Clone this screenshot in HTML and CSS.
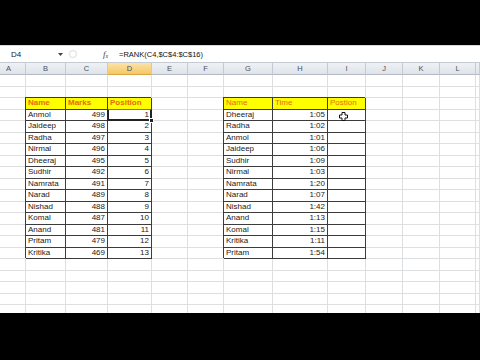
FILE: index.html
```html
<!DOCTYPE html>
<html>
<head>
<meta charset="utf-8">
<link rel="stylesheet" href="styles.css">
</head>
<body>
<div class="letterbox"></div>
<div class="fbar">
  <div class="namebox"><span>D4</span><svg class="dd" width="5" height="3" viewBox="0 0 5 3"><path d="M0 0h5L2.5 3z" fill="#444"/></svg></div>
  <div class="fbtns"><svg width="10" height="10" viewBox="0 0 10 10"><circle cx="5" cy="5" r="3.5" fill="none" stroke="#e4e6ea" stroke-width="1.5"/></svg></div>
  <div class="fx">f<sub>x</sub></div>
  <div class="formula">=RANK(C4,$C$4:$C$16)</div>
</div>
<div class="sheetwrap">
<table class="sheet">
<colgroup>
<col class="c26"><col class="c40"><col class="c42"><col class="c44"><col class="c36"><col class="c36"><col class="c49"><col class="c55"><col class="c38"><col class="c37"><col class="c37"><col class="c36"><col class="c4">
</colgroup>
<tr class="colhead"><th class="a">A</th><th>B</th><th>C</th><th class="cur">D</th><th>E</th><th>F</th><th>G</th><th>H</th><th>I</th><th>J</th><th>K</th><th>L</th><th></th></tr>
<tr><td></td><td></td><td></td><td></td><td></td><td></td><td></td><td></td><td></td><td></td><td></td><td></td><td></td></tr>
<tr><td></td><td></td><td></td><td></td><td></td><td></td><td></td><td></td><td></td><td></td><td></td><td></td><td></td></tr>
<tr><td></td><td class="b h strong">Name</td><td class="b h strong">Marks</td><td class="b h strong">Position</td><td></td><td></td><td class="b h">Name</td><td class="b h">Time</td><td class="b h">Postion</td><td></td><td></td><td></td><td></td></tr>
<tr><td></td><td class="b">Anmol</td><td class="b n">499</td><td class="b n sel">1</td><td></td><td></td><td class="b">Dheeraj</td><td class="b n">1:05</td><td class="b cursorcell"><svg class="cursor" width="9" height="9" viewBox="0 0 9 9"><path d="M3 .5h3v2.5h2.5v3H6v2.5H3V6H.5V3H3z" fill="#fff" stroke="#111" stroke-width="1"/></svg></td><td></td><td></td><td></td><td></td></tr>
<tr><td></td><td class="b">Jaideep</td><td class="b n">498</td><td class="b n">2</td><td></td><td></td><td class="b">Radha</td><td class="b n">1:02</td><td class="b"></td><td></td><td></td><td></td><td></td></tr>
<tr><td></td><td class="b">Radha</td><td class="b n">497</td><td class="b n">3</td><td></td><td></td><td class="b">Anmol</td><td class="b n">1:01</td><td class="b"></td><td></td><td></td><td></td><td></td></tr>
<tr><td></td><td class="b">Nirmal</td><td class="b n">496</td><td class="b n">4</td><td></td><td></td><td class="b">Jaideep</td><td class="b n">1:06</td><td class="b"></td><td></td><td></td><td></td><td></td></tr>
<tr><td></td><td class="b">Dheeraj</td><td class="b n">495</td><td class="b n">5</td><td></td><td></td><td class="b">Sudhir</td><td class="b n">1:09</td><td class="b"></td><td></td><td></td><td></td><td></td></tr>
<tr><td></td><td class="b">Sudhir</td><td class="b n">492</td><td class="b n">6</td><td></td><td></td><td class="b">Nirmal</td><td class="b n">1:03</td><td class="b"></td><td></td><td></td><td></td><td></td></tr>
<tr><td></td><td class="b">Namrata</td><td class="b n">491</td><td class="b n">7</td><td></td><td></td><td class="b">Namrata</td><td class="b n">1:20</td><td class="b"></td><td></td><td></td><td></td><td></td></tr>
<tr><td></td><td class="b">Narad</td><td class="b n">489</td><td class="b n">8</td><td></td><td></td><td class="b">Narad</td><td class="b n">1:07</td><td class="b"></td><td></td><td></td><td></td><td></td></tr>
<tr><td></td><td class="b">Nishad</td><td class="b n">488</td><td class="b n">9</td><td></td><td></td><td class="b">Nishad</td><td class="b n">1:42</td><td class="b"></td><td></td><td></td><td></td><td></td></tr>
<tr><td></td><td class="b">Komal</td><td class="b n">487</td><td class="b n">10</td><td></td><td></td><td class="b">Anand</td><td class="b n">1:13</td><td class="b"></td><td></td><td></td><td></td><td></td></tr>
<tr><td></td><td class="b">Anand</td><td class="b n">481</td><td class="b n">11</td><td></td><td></td><td class="b">Komal</td><td class="b n">1:15</td><td class="b"></td><td></td><td></td><td></td><td></td></tr>
<tr><td></td><td class="b">Pritam</td><td class="b n">479</td><td class="b n">12</td><td></td><td></td><td class="b">Kritika</td><td class="b n">1:11</td><td class="b"></td><td></td><td></td><td></td><td></td></tr>
<tr><td></td><td class="b">Kritika</td><td class="b n">469</td><td class="b n">13</td><td></td><td></td><td class="b">Pritam</td><td class="b n">1:54</td><td class="b"></td><td></td><td></td><td></td><td></td></tr>
<tr><td></td><td></td><td></td><td></td><td></td><td></td><td></td><td></td><td></td><td></td><td></td><td></td><td></td></tr>
<tr><td></td><td></td><td></td><td></td><td></td><td></td><td></td><td></td><td></td><td></td><td></td><td></td><td></td></tr>
<tr><td></td><td></td><td></td><td></td><td></td><td></td><td></td><td></td><td></td><td></td><td></td><td></td><td></td></tr>
<tr><td></td><td></td><td></td><td></td><td></td><td></td><td></td><td></td><td></td><td></td><td></td><td></td><td></td></tr>
<tr><td></td><td></td><td></td><td></td><td></td><td></td><td></td><td></td><td></td><td></td><td></td><td></td><td></td></tr>
<tr><td></td><td></td><td></td><td></td><td></td><td></td><td></td><td></td><td></td><td></td><td></td><td></td><td></td></tr>
</table>
</div>
</body>
</html>
```

FILE: styles.css
```css
html, body {
  margin: 0;
  padding: 0;
  background: #000;
}
body {
  width: 480px;
  height: 360px;
  overflow: hidden;
  font-family: "Liberation Sans", Arial, sans-serif;
  color: #222;
}
.letterbox {
  height: 45px;
  background: #000;
}
.fbar {
  height: 16px;
  background: #fff;
  border-top: 1px solid #d6dae0;
  border-bottom: 1px solid #c6cbd2;
  display: flex;
  align-items: center;
  font-size: 8px;
}
.namebox {
  width: 65px;
  box-sizing: border-box;
  padding: 0 2px 0 11px;
  display: flex;
  align-items: center;
  justify-content: space-between;
}
.fbtns {
  width: 38px;
  display: flex;
  align-items: center;
  padding-left: 3px;
  box-sizing: border-box;
}
.fx {
  width: 16px;
  font-family: "Liberation Serif", serif;
  font-style: italic;
  font-size: 9px;
  color: #444;
}
.fx sub {
  font-size: 6px;
  vertical-align: -1px;
}
.formula {
  font-size: 7.5px;
  color: #111;
}
.sheetwrap {
  height: 250px;
  overflow: hidden;
  background: #fff;
}
.sheet {
  border-collapse: separate;
  border-spacing: 0;
  table-layout: fixed;
  width: 480px;
  font-size: 8px;
}
.c26 { width: 26px; }
.c40 { width: 40px; }
.c42 { width: 42px; }
.c44 { width: 44px; }
.c36 { width: 36px; }
.c49 { width: 49px; }
.c55 { width: 55px; }
.c38 { width: 38px; }
.c37 { width: 37px; }
.c4 { width: 4px; }
.colhead th {
  height: 11px;
  padding: 0;
  font-weight: normal;
  font-size: 7.5px;
  color: #4a4f57;
  background: linear-gradient(#eef1f5, #dfe4ea);
  border-right: 1px solid #c4cad3;
  border-bottom: 1px solid #b3bac4;
  text-align: center;
  line-height: 11px;
}
.colhead th.a {
  text-align: left;
  padding-left: 6px;
}
.colhead th.cur {
  background: linear-gradient(#fbe3a8, #f5c767);
  border-bottom-color: #d9a441;
}
.sheet tr {
  height: 11.5px;
}
.sheet td {
  padding: 0 2px;
  line-height: 10px;
  border-right: 1px solid #dedfe1;
  border-bottom: 1px solid #dedfe1;
  white-space: nowrap;
  overflow: hidden;
}
.sheet td.b {
  border-right-color: #3c3c3c;
  border-bottom-color: #3c3c3c;
  box-shadow: -1px -1px 0 #3c3c3c;
}
.sheet td.n {
  text-align: right;
}
.sheet td.h {
  background: #ffff00;
  color: #e46c0a;
}
.sheet td.strong {
  font-weight: bold;
}
.sheet td.sel {
  position: relative;
  overflow: visible;
}
.sheet td.sel::after {
  content: "";
  position: absolute;
  left: -1px;
  top: -1px;
  right: -1px;
  bottom: -1px;
  border: 2px solid #222;
  border-top-width: 1px;
  border-top-color: #777;
}
.sheet td.sel::before {
  content: "";
  position: absolute;
  right: -3px;
  bottom: -3px;
  width: 3px;
  height: 3px;
  background: #222;
  border: 1px solid #fff;
  z-index: 2;
}
.sheet td.cursorcell {
  position: relative;
  overflow: visible;
}
.cursor {
  position: absolute;
  left: 11px;
  top: 2px;
}
```
